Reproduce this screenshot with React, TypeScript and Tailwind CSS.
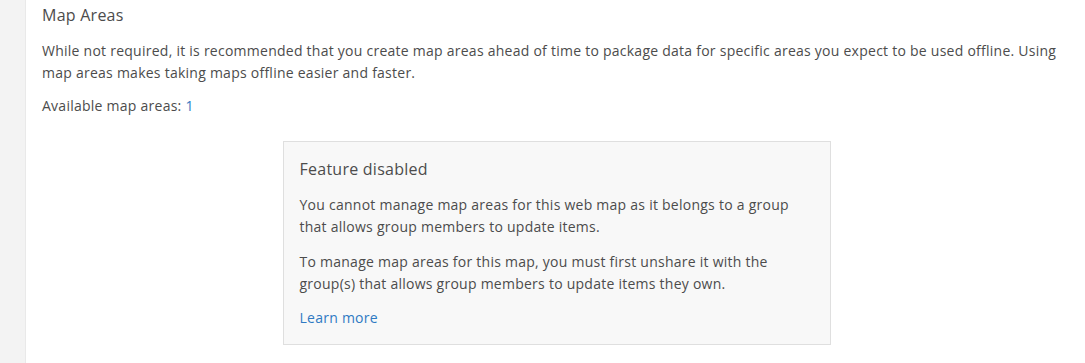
import React from 'react';

export default function App() {
  return (
    <div className="flex min-h-[363px] bg-white text-[#4c4c4c] tracking-[0.25px] font-['Open_Sans',sans-serif]">
      {/* side rail */}
      <div className="w-[26px] shrink-0 bg-[#f3f3f3] border-r border-[#e9e9e9]" />

      <div className="flex-1 pl-[16px] pr-[12px]">
        <h2 className="text-[16px] leading-[22px] pt-[4px] mb-[14px]">Map Areas</h2>
        <p className="text-[14px] leading-[22px] mb-[11px]">
          While not required, it is recommended that you create map areas ahead of time to package data for specific areas you expect to be used offline. Using map areas makes taking maps offline easier and faster.
        </p>
        <p className="text-[14px] leading-[22px]">
          Available map areas: <span className="text-[#2f7ac3]">1</span>
        </p>

        <div className="flex justify-center mt-[24px] pr-[2px]">
          <div className="w-[548px] bg-[#f8f8f8] border border-[#dfdfdf] px-[16px] pt-[16px] pb-[15px]">
            <h3 className="text-[16px] leading-[22px] mb-[14px]">Feature disabled</h3>
            <p className="text-[14px] leading-[22px] mb-[13px]">
              You cannot manage map areas for this web map as it belongs to a group that allows group members to update items.
            </p>
            <p className="text-[14px] leading-[22px] mb-[10px]">
              To manage map areas for this map, you must first unshare it with the group(s) that allows group members to update items they own.
            </p>
            <a className="text-[14px] leading-[22px] text-[#2f7ac3]">Learn more</a>
          </div>
        </div>
      </div>
    </div>
  );
}
